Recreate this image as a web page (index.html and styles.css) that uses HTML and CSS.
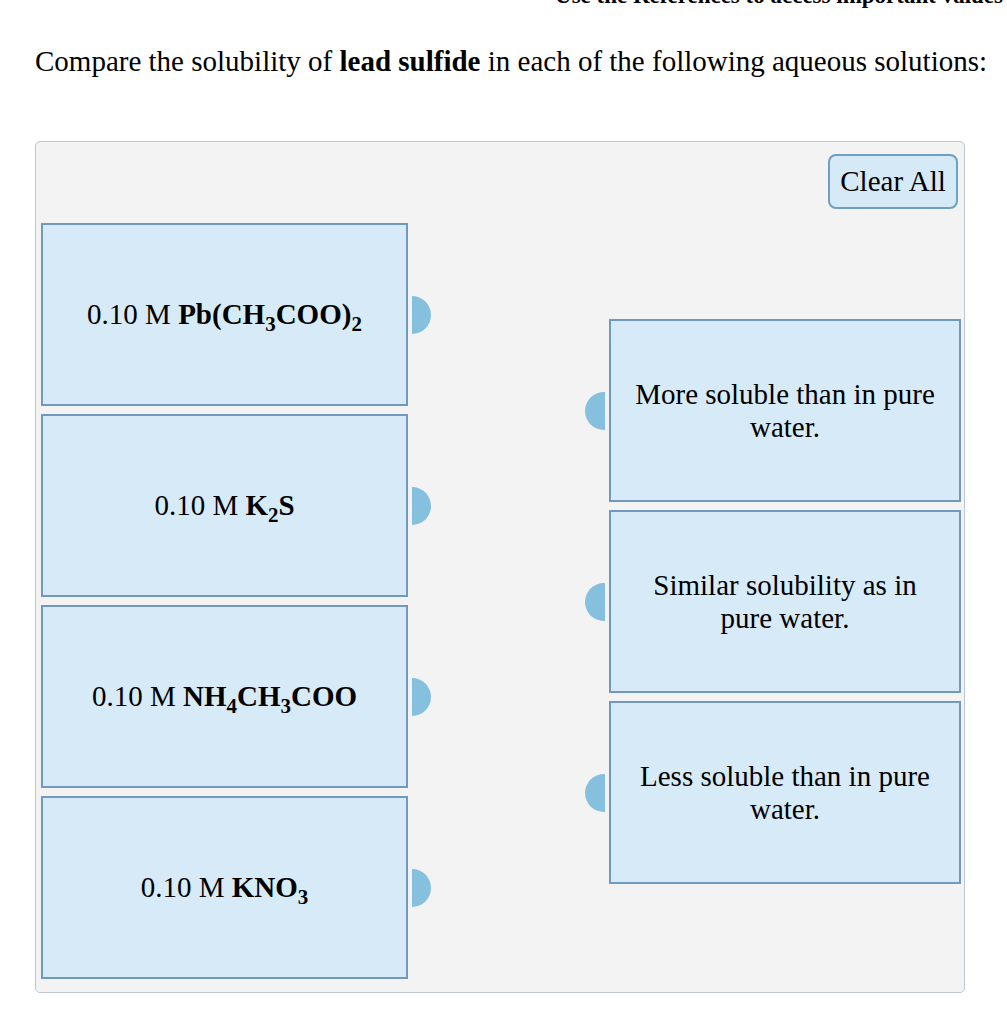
FILE: index.html
```html
<!DOCTYPE html>
<html lang="en">
<head>
  <meta charset="UTF-8">
  <title>Solubility of lead sulfide</title>
  <link rel="stylesheet" href="styles.css">
</head>
<body>

<div class="refs">Use the References to access important values</div>

<p class="question">Compare the solubility of <b>lead sulfide</b> in each of the following aqueous solutions:</p>

<div class="board">
  <div class="toolbar">
    <button class="clear-btn" type="button">Clear All</button>
  </div>

  <div class="columns">
    <!-- Soluzioni -->
    <div class="col col-left">
      <div class="item">
        <div class="card"><span>0.10 M <b>Pb(CH<sub>3</sub>COO)<sub>2</sub></b></span></div>
        <span class="knob knob-right"></span>
      </div>
      <div class="item">
        <div class="card"><span>0.10 M <b>K<sub>2</sub>S</b></span></div>
        <span class="knob knob-right"></span>
      </div>
      <div class="item">
        <div class="card"><span>0.10 M <b>NH<sub>4</sub>CH<sub>3</sub>COO</b></span></div>
        <span class="knob knob-right"></span>
      </div>
      <div class="item">
        <div class="card"><span>0.10 M <b>KNO<sub>3</sub></b></span></div>
        <span class="knob knob-right"></span>
      </div>
    </div>

    <!-- Risposte -->
    <div class="col col-right">
      <div class="item">
        <span class="knob knob-left"></span>
        <div class="card card-answer"><span>More soluble than in pure water.</span></div>
      </div>
      <div class="item">
        <span class="knob knob-left"></span>
        <div class="card card-answer"><span>Similar solubility as in pure water.</span></div>
      </div>
      <div class="item">
        <span class="knob knob-left"></span>
        <div class="card card-answer"><span>Less soluble than in pure water.</span></div>
      </div>
    </div>
  </div>
</div>

</body>
</html>
```

FILE: styles.css
```css
body {
  font-family: 'Liberation Serif', 'Times New Roman', serif;
  background-color: white;
  color: #000;
  margin: 0;
  overflow: hidden;
}

.refs {
  font-weight: bold;
  font-size: 23px;
  text-align: right;
  white-space: nowrap;
  margin-top: -16px;
  margin-right: 4px;
  line-height: 24px;
}

.question {
  font-size: 29px;
  margin: 37px 0 0 35px;
  line-height: 32px;
}

.board {
  box-sizing: border-box;
  width: 930px;
  height: 852px;
  margin: 64px 0 0 35px;
  padding: 12px 3px 0 5px;
  background-color: #f3f3f3;
  border: 1px solid #bcc5d0;
  border-radius: 5px;
}

.toolbar {
  display: flex;
  justify-content: flex-end;
  padding-right: 3px;
}

.clear-btn {
  box-sizing: border-box;
  width: 130px;
  height: 55px;
  padding: 0;
  font-family: inherit;
  font-size: 29px;
  color: #000;
  background-color: #d6e9f7;
  border: 2px solid #6f9fc3;
  border-radius: 8px;
  cursor: pointer;
}

.columns {
  display: flex;
  justify-content: space-between;
  margin-top: 14px;
}

.col {
  display: flex;
  flex-direction: column;
  gap: 8px;
}

.col-right {
  margin-top: 96px;
}

.item {
  display: flex;
  align-items: center;
  gap: 4px;
}

.card {
  box-sizing: border-box;
  width: 367px;
  height: 183px;
  display: flex;
  align-items: center;
  justify-content: center;
  text-align: center;
  font-size: 29px;
  line-height: 33px;
  background-color: #d7eaf7;
  border: 2px solid #7199bd;
}

.card-answer {
  width: 352px;
  padding: 0 20px;
}

sub {
  font-size: 21px;
  line-height: 0;
  vertical-align: -7px;
}

.knob {
  display: block;
  width: 19px;
  height: 38px;
  background-color: #85c0de;
}

.knob-right {
  border-radius: 0 19px 19px 0;
}

.knob-left {
  width: 20px;
  border-radius: 20px 0 0 20px;
}
```
